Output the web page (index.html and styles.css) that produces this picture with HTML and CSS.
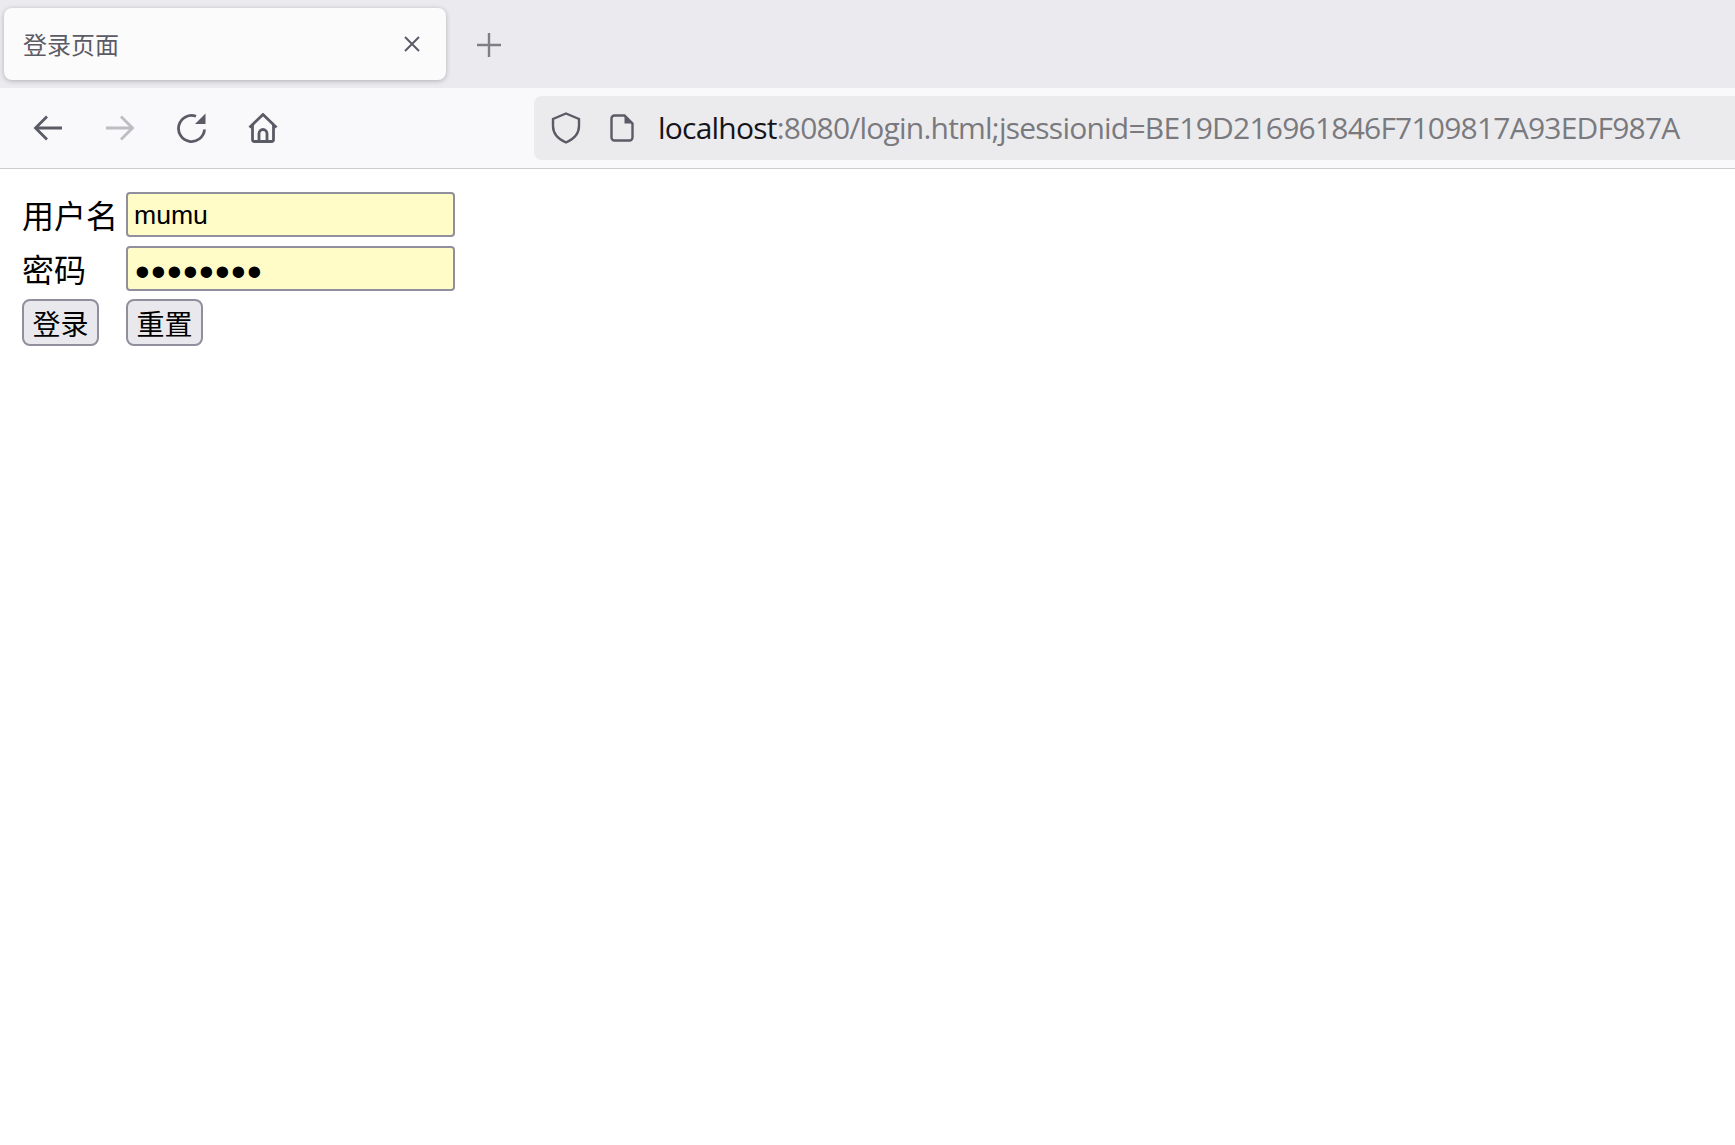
FILE: index.html
```html
<!DOCTYPE html>
<html lang="zh-CN">
<head>
  <meta charset="UTF-8">
  <title>登录页面</title>
  <link rel="stylesheet" href="styles.css">
</head>
<body>

  <div class="tab-bar">
    <div class="tab">
      <span class="tab-title">登录页面</span>
      <svg class="tab-close" viewBox="0 0 16 16"><path d="M1 1L15 15M15 1L1 15"/></svg>
    </div>
    <svg class="new-tab" viewBox="0 0 24 24"><path d="M12 0V24M0 12H24"/></svg>
  </div>

  <div class="toolbar">
    <svg class="nav-icon" viewBox="0 0 30 30"><path d="M29 15H3M14 3.500L2.500 15L14 26.500"/></svg>
    <svg class="nav-icon nav-disabled" viewBox="0 0 30 30"><path d="M1 15H27M16 3.500L27.500 15L16 26.500"/></svg>
    <svg class="nav-icon" viewBox="0 0 30 30">
      <path d="M19 3.300A13 13 0 1 0 27.500 16.500"/>
      <path class="icon-fill" d="M28.500 0.500V11H18Z"/>
    </svg>
    <svg class="nav-icon nav-home" viewBox="0 0 30 30">
      <path d="M1.500 14.500L15 1.500L28.500 14.500"/>
      <path d="M4.500 11.500V26.500A2 2 0 0 0 6.500 28.500H23.500A2 2 0 0 0 25.500 26.500V11.500"/>
      <path d="M11 28.500V20.500A4 4 0 0 1 19 20.500V28.500"/>
    </svg>

    <div class="url-bar">
      <svg class="shield-icon" viewBox="0 0 30 32"><path d="M15 1.500L28 7V14C28 22 22 27.500 15 30.500C8 27.500 2 22 2 14V7Z"/></svg>
      <svg class="page-icon" viewBox="0 0 24 28">
        <path d="M4.500 1.500H14.500L22.500 9.500V23.500A3 3 0 0 1 19.500 26.500H4.500A3 3 0 0 1 1.500 23.500V4.500A3 3 0 0 1 4.500 1.500Z"/>
        <path class="icon-fill" d="M14.500 1.500L22.500 9.500H14.500Z"/>
      </svg>
      <div class="url-text"><span class="url-host">localhost</span>:8080/login.html;jsessionid=BE19D216961846F7109817A93EDF987A</div>
    </div>
  </div>

  <form class="login-form">
    <label class="form-label">用户名</label>
    <input class="form-input" type="text" value="mumu">
    <label class="form-label">密码</label>
    <input class="form-input password-input" type="password" value="12345678">
    <button class="form-button" type="button">登录</button>
    <button class="form-button" type="button">重置</button>
  </form>

</body>
</html>
```

FILE: styles.css
```css
* {
  box-sizing: border-box;
}

html {
  background: #fff;
}

body {
  margin: 0;
  font-family: "Liberation Sans", "Noto Sans CJK SC", sans-serif;
  overflow: hidden;
}

svg path {
  fill: none;
  stroke: #5b5b66;
  stroke-width: 2.8;
}

svg path.icon-fill {
  fill: #5b5b66;
  stroke: none;
}

.tab-bar {
  display: flex;
  align-items: center;
  height: 88px;
  padding-left: 4px;
  background: #ebebef;
}

.tab {
  display: flex;
  align-items: center;
  justify-content: space-between;
  width: 442px;
  height: 72px;
  padding: 0 26px 0 19px;
  background: #fbfbfc;
  border-radius: 8px;
  box-shadow: 0 1px 5px rgba(0, 0, 0, 0.25);
}

.tab-title {
  margin-top: -2px;
  font-family: "Noto Sans CJK SC", sans-serif;
  font-size: 24px;
  color: #5b5b66;
}

.tab-close {
  width: 16px;
  height: 16px;
}

.tab-close path {
  stroke-width: 2;
}

.new-tab {
  width: 24px;
  height: 24px;
  margin: 2px 0 0 31px;
}

.new-tab path {
  stroke: #7e7e87;
  stroke-width: 2.4;
}

.toolbar {
  display: flex;
  align-items: center;
  gap: 42px;
  height: 81px;
  padding-left: 33px;
  background: #f9f9fb;
  border-bottom: 1px solid #ccc;
}

.nav-icon {
  flex: none;
  width: 30px;
  height: 30px;
}

.nav-home {
  margin-left: -1px;
}

.nav-disabled path {
  stroke: #bdbdc2;
}

.url-bar {
  flex: 1;
  display: flex;
  align-items: center;
  height: 64px;
  margin-left: 214px;
  padding-left: 17px;
  background: #ebebee;
  border-radius: 8px 0 0 8px;
}

.shield-icon {
  flex: none;
  width: 30px;
  height: 32px;
}

.page-icon {
  flex: none;
  width: 24px;
  height: 28px;
  margin-left: 29px;
}

.shield-icon path,
.page-icon path {
  stroke-width: 2.4;
}

.page-icon path.icon-fill {
  stroke: none;
}

.url-text {
  margin: -2px 0 0 24px;
  font-family: "Open Sans", sans-serif;
  font-size: 30px;
  letter-spacing: -0.78px;
  color: #7a7a7e;
  white-space: nowrap;
}

.url-host {
  color: #15141a;
}

.login-form {
  display: grid;
  grid-template-columns: 104px 329px;
  align-items: center;
  justify-items: start;
  row-gap: 9px;
  padding: 23px 0 0 22px;
}

.form-label {
  font-family: "Noto Sans CJK SC", sans-serif;
  font-size: 32px;
  line-height: 45px;
  color: #000;
}

.form-input {
  width: 329px;
  height: 45px;
  padding: 2px 6px 0;
  border: 2.5px solid #8f8f9d;
  border-radius: 4px;
  background: #fffcc8;
  font-family: "Liberation Sans", sans-serif;
  font-size: 26.6px;
  color: #000;
  outline: none;
}

.password-input {
  padding: 6px 6px 0 7px;
  font-size: 42px;
  letter-spacing: 1.3px;
}

.form-button {
  width: 77px;
  height: 47px;
  margin-top: -1px;
  padding: 0;
  border: 2.5px solid #8f8f9d;
  border-radius: 8px;
  background: #e9e9ed;
  font-family: "Noto Sans CJK SC", sans-serif;
  font-size: 28px;
  color: #000;
}
```
